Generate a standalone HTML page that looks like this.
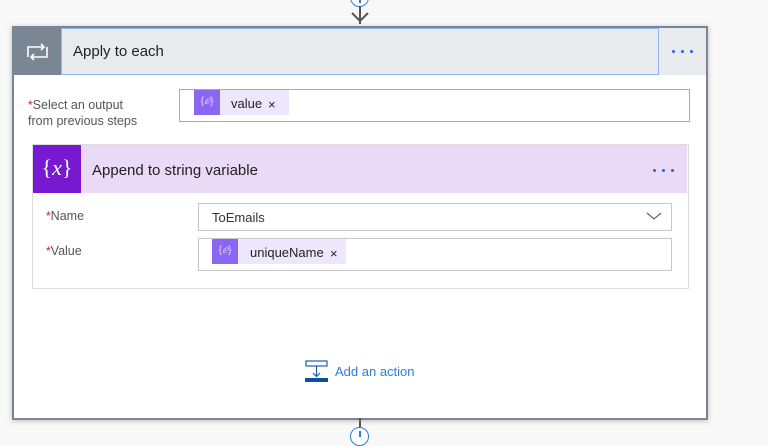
<!DOCTYPE html>
<html><head><style>
body{margin:0;width:768px;height:436px;background:#f8f8f8;font-family:"Segoe UI","Liberation Sans",sans-serif;position:relative;overflow:hidden}
.a{position:absolute}
.lbl{font-size:12.5px;color:#555}
.req{color:#e81123;font-size:12px}
.chip{position:absolute;background:#ece7fd;height:25px;font-size:13px;color:#222}
.chip .ic{position:absolute;left:0;top:0;width:26px;height:25px;background:#8b66f2;color:#e0d8ff;font-size:10px;text-align:center;line-height:24px}
.dot{position:absolute;width:3px;height:3px;border-radius:50%;background:#2266dd}
</style></head><body>
<!-- top connector -->
<div class="a" style="left:350px;top:-12px;width:17px;height:17px;border:1.5px solid #2d7be0;border-radius:50%;background:#fff"></div>
<div class="a" style="left:359px;top:-3px;width:1.5px;height:6px;background:#2d7be0"></div>
<div class="a" style="left:359px;top:6px;width:2px;height:18px;background:#555"></div>
<svg class="a" style="left:350px;top:10px" width="20" height="16"><path d="M2 3 L10 11 L18 3" stroke="#555" stroke-width="2" fill="none"/></svg>
<!-- outer card -->
<div class="a" style="left:12px;top:26px;width:692px;height:390px;border:2px solid #7b8695;background:#fff;box-shadow:0 1px 5px rgba(0,0,0,.25)"></div>
<div class="a" style="left:14px;top:28px;width:692px;height:47px;background:#e8ebee"></div>
<div class="a" style="left:14px;top:28px;width:47px;height:47px;background:#7b8695"></div>
<svg class="a" style="left:25px;top:41px" width="26" height="22"><path d="M3 16V6h16M16 3l3 3-3 3" stroke="#fff" stroke-width="1.6" fill="none"/><path d="M22 6v10H6M9 13l-3 3 3 3" stroke="#fff" stroke-width="1.6" fill="none"/></svg>
<div class="a" style="left:61px;top:28px;width:596px;height:45px;border:1px solid #8fb4ee"></div>
<div class="a" style="left:73px;top:43px;font-size:15px;color:#222">Apply to each</div>
<div class="dot" style="left:672px;top:50px"></div><div class="dot" style="left:681px;top:50px"></div><div class="dot" style="left:690px;top:50px"></div>
<!-- select output -->
<div class="a lbl" style="left:28px;top:97px;line-height:16px"><span class="req">*</span>Select an output<br>from previous steps</div>
<div class="a" style="left:179px;top:89px;width:509px;height:31px;border:1px solid #aaa;background:#fff"></div>
<div class="chip" style="left:194px;top:90px;width:95px;"><div class="ic">{<i>ⅇ</i>}</div><span class="a" style="left:37px;top:6px">value</span><span class="a" style="left:74px;top:7px;font-size:13px">×</span></div>
<!-- inner card -->
<div class="a" style="left:32px;top:144px;width:655px;height:143px;border:1px solid #ddd;background:#fff"></div>
<div class="a" style="left:33px;top:145px;width:654px;height:48px;background:#ead9f7"></div>
<div class="a" style="left:33px;top:145px;width:48px;height:48px;background:#7719d1;color:#fff;font-family:'Liberation Serif',serif;font-size:22px;text-align:center;line-height:46px">{<i>x</i>}</div>
<div class="a" style="left:92px;top:162px;font-size:15px;color:#222">Append to string variable</div>
<div class="dot" style="left:653px;top:169px"></div><div class="dot" style="left:662px;top:169px"></div><div class="dot" style="left:671px;top:169px"></div>
<div class="a lbl" style="left:46px;top:209px"><span class="req">*</span>Name</div>
<div class="a" style="left:198px;top:203px;width:472px;height:26px;border:1px solid #c8c8c8"></div>
<div class="a" style="left:212px;top:210px;font-size:13px;color:#333">ToEmails</div>
<svg class="a" style="left:646px;top:211px" width="16" height="10"><path d="M1 2 L8 8 L15 2" stroke="#666" stroke-width="1.2" fill="none"/></svg>
<div class="a lbl" style="left:46px;top:244px"><span class="req">*</span>Value</div>
<div class="a" style="left:198px;top:238px;width:472px;height:31px;border:1px solid #c8c8c8"></div>
<div class="chip" style="left:212px;top:239px;width:134px;"><div class="ic">{<i>ⅇ</i>}</div><span class="a" style="left:38px;top:6px">uniqueName</span><span class="a" style="left:118px;top:7px">×</span></div>
<!-- add action -->
<svg class="a" style="left:305px;top:360px" width="24" height="22"><rect x="1" y="1" width="21" height="5" fill="none" stroke="#1a5fb4" stroke-width="1.2"/><path d="M11.5 6v10M8 13l3.5 3.5 3.5-3.5" stroke="#1a5fb4" stroke-width="1.2" fill="none"/><rect x="0" y="18" width="23" height="4" fill="#0f4fa0"/></svg>
<div class="a" style="left:335px;top:364px;font-size:13px;color:#2d7be0">Add an action</div>
<!-- bottom connector -->
<div class="a" style="left:359px;top:418px;width:2px;height:10px;background:#555"></div>
<div class="a" style="left:350px;top:427px;width:17px;height:17px;border:1.5px solid #2d7be0;border-radius:50%;background:#fff"></div>
<div class="a" style="left:359px;top:431px;width:1.5px;height:6px;background:#2d7be0"></div>
</body></html>
